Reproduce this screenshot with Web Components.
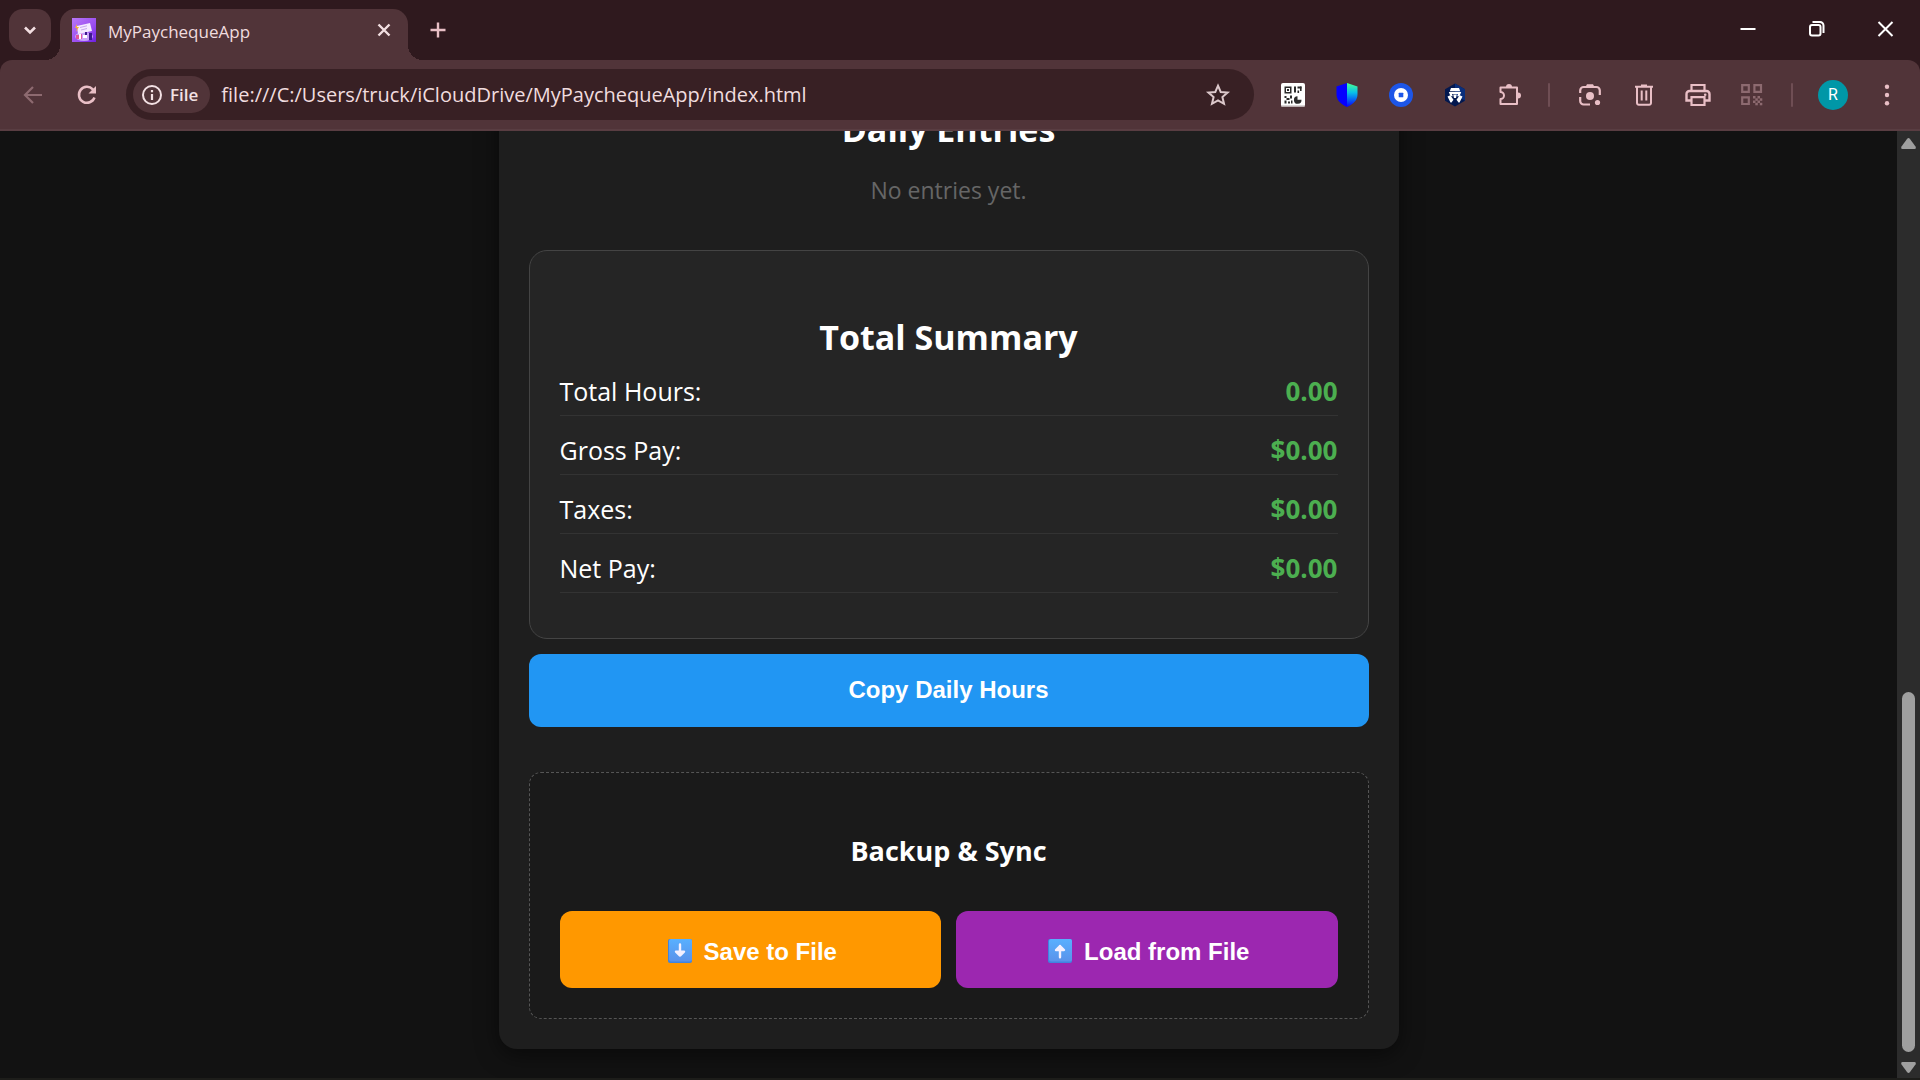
<!DOCTYPE html>
<html lang="en">
<head>
<meta charset="UTF-8">
<meta name="viewport" content="width=device-width, initial-scale=1.0">
<title>MyPaychequeApp</title>
<style>
    html, body {
        margin: 0;
        height: 100%;
        overflow: hidden;
        background: #121212;
    }

    body {
        font-family: 'Segoe UI', 'Open Sans', 'Noto Sans', sans-serif;
        color: #fff;
    }
</style>
</head>
<body>
<browser-window>
    <tab-strip slot="tabs">
        <browser-tab>MyPaychequeApp</browser-tab>
    </tab-strip>
    <browser-toolbar slot="toolbar" url="file:///C:/Users/truck/iCloudDrive/MyPaychequeApp/index.html"></browser-toolbar>
    <paycheque-app>
        <daily-entries></daily-entries>
        <total-summary>
            <summary-row label="Total Hours:">0.00</summary-row>
            <summary-row label="Gross Pay:">$0.00</summary-row>
            <summary-row label="Taxes:">$0.00</summary-row>
            <summary-row label="Net Pay:">$0.00</summary-row>
        </total-summary>
        <app-button color="blue">Copy Daily Hours</app-button>
        <backup-sync>
            <app-button color="orange" icon="down">Save to File</app-button>
            <app-button color="purple" icon="up">Load from File</app-button>
        </backup-sync>
    </paycheque-app>
    <page-scrollbar slot="scrollbar"></page-scrollbar>
</browser-window>

<script>
    const icons = {
        chevron: '<path d="M7 9.5l5 5 5-5" stroke-width="2.6"/>',
        close: '<path d="M6.5 6.5l11 11M17.5 6.5l-11 11" stroke-width="2.4"/>',
        plus: '<path d="M12 4.5v15M4.5 12h15" stroke-width="2.4"/>',
        back: '<path d="M21 12H4M12 4l-8 8 8 8" stroke-width="2.2"/>',
        reload: '<path d="M19.5 14.5a8 8 0 1 1-1.7-8.2L20 8.5" stroke-width="2.5"/><path d="M21 3v7.5h-7.5z" fill="currentColor" stroke="none"/>',
        info: '<circle cx="12" cy="12" r="9" stroke-width="2"/><path d="M12 11v6M12 7v2.2" stroke-width="2.2"/>',
        star: '<path d="M12 2.7l2.7 6.3 6.9.6-5.2 4.5 1.6 6.7-6-3.5-6 3.5 1.6-6.7-5.2-4.5 6.9-.6z" stroke-width="2"/>',
        qrcard: `<g stroke="none"><rect width="24" height="24" rx="2" fill="#fff"/><path d="M0 22.5h24a2 2 0 0 1-2 1.5H2a2 2 0 0 1-2-1.500z" fill="#b9aeb0"/>
            <g fill="#2b2b2b"><path d="M3.5 3.5h7v7h-7zM5 5v4h4V5z" fill-rule="evenodd"/><rect x="6" y="6" width="2" height="2"/>
            <rect x="13" y="3.5" width="2" height="6"/><rect x="16.5" y="3.5" width="4" height="2"/><rect x="19" y="3.5" width="1.6" height="4.5"/><rect x="16.5" y="7.5" width="1.6" height="2.5"/>
            <rect x="3.5" y="13" width="2" height="2"/><rect x="5.5" y="15" width="3" height="2"/><rect x="9" y="12.5" width="2" height="3"/><rect x="3.5" y="17.5" width="2" height="3"/><rect x="7" y="18.5" width="2" height="2"/><rect x="10" y="17.5" width="1.5" height="3"/>
            <path d="M16.5 13.2v3.600h4a3.800 3.800 0 1 1-4-3.600z"/></g></g>`,
        shield: `<defs><linearGradient id="sh" x1="0" y1="0" x2="0" y2="1"><stop offset="0" stop-color="#48ff91"/><stop offset=".4" stop-color="#08c0e8"/><stop offset="1" stop-color="#0500ff"/></linearGradient></defs>
            <g stroke="none"><path d="M12 0v24C4.5 20.6 1.5 16.5 1.5 11V3.5z" fill="#0500ff"/><path d="M12 0v24c7.5-3.4 10.5-7.5 10.5-13V3.5z" fill="url(#sh)"/></g>`,
        coin: '<g stroke="none"><circle cx="12" cy="12" r="12" fill="#1d56e8"/><circle cx="12" cy="12" r="7" fill="#fff"/><rect x="9.7" y="9.7" width="4.6" height="4.6" rx=".5" fill="#1d56e8"/></g>',
        hexlion: `<g stroke="none"><path d="M12 .5l10 5.7v11.600l-10 5.700-10-5.700V6.2z" fill="#03184f"/><path d="M12 .5l10 5.7v11.600l-10-5.800z" fill="#0a2f7c"/>
            <g fill="#fff"><path d="M8 5h8l1.200 3.200H6.800z"/><path d="M5.800 9h12.400l-1.700 4.200h-2.300l.8-2.200H9l.8 2.200H7.500z"/>
            <path d="M4.500 13.500L7.300 12.300l3.200 4.400-2 2.800H7.500zM19.500 13.500l-2.800-1.200-3.200 4.400 2 2.800h1z"/><path d="M10.200 11.500h3.600l-.8 3.500h-2z"/></g></g>`,
        puzzle: '<path d="M3.5 4.5H20V21H3.5v-5a3.500 3.500 0 0 0 0-7z" stroke-width="2" stroke-linejoin="round"/><path d="M9 4a3 3 0 0 1 6 0zM21 9.5a3 3 0 0 1 0 6z" fill="currentColor" stroke="none"/>',
        lens: `<path d="M2.2 10V7.5A3.5 3.5 0 0 1 5.7 4h12.600a3.500 3.500 0 0 1 3.500 3.500V12M2.2 14v4a3.500 3.500 0 0 0 3.500 3.500H12" stroke-width="2.2"/>
            <path d="M7.5 4L9 1.200h6L16.5 4z" fill="currentColor" stroke="none"/><circle cx="12" cy="13" r="4" fill="currentColor" stroke="none"/><circle cx="19.5" cy="19.5" r="2.6" fill="currentColor" stroke="none"/>`,
        trash: '<path d="M3 3.8h18M9 2.5h6M5 4.5V20a1.800 1.800 0 0 0 1.800 1.800h10.400A1.800 1.800 0 0 0 19 20V4.5M9.7 7.5v10M14.3 7.5v10" stroke-width="2"/>',
        printer: `<path d="M5.5 7.5V2h13v5.5" stroke-width="2.2"/><path d="M5.5 17.5h-5V11a3 3 0 0 1 3-3h17a3 3 0 0 1 3 3v6.500h-5" stroke-width="2.4"/>
            <path d="M5.5 14.200h13V22h-13z" stroke-width="2.2"/><circle cx="19.2" cy="11.7" r="1.3" fill="currentColor" stroke="none"/>`,
        qr: `<path d="M2.2 2.2h6.600v6.600H2.2zM14.4 2.2H21v6.600h-6.600zM2.2 14.4h6.600V21H2.2z" stroke-width="2.2"/>
            <g fill="currentColor" stroke="none"><rect x="13" y="13" width="2.5" height="2.5"/><rect x="17.5" y="13" width="2.5" height="2.5"/><rect x="15.3" y="15.3" width="2.5" height="2.5"/><rect x="19.8" y="15.3" width="2.5" height="2.5"/><rect x="13" y="17.5" width="2.5" height="2.5"/><rect x="17.5" y="17.5" width="2.5" height="2.5"/><rect x="15.3" y="19.8" width="2.5" height="2.5"/><rect x="19.8" y="19.8" width="2.5" height="2.5"/></g>`,
        dots: '<g fill="currentColor" stroke="none"><circle cx="12" cy="3.8" r="2.2"/><circle cx="12" cy="12" r="2.2"/><circle cx="12" cy="20.2" r="2.2"/></g>',
        minimize: '<path d="M4.5 12h15" stroke-width="2"/>',
        restore: '<rect x="5" y="8" width="10.5" height="10.5" rx="2" stroke-width="2"/><path d="M7.5 5H15a3.500 3.500 0 0 1 3.500 3.500V16" stroke-width="2"/>',
        exit: '<path d="M4.500 5l14 14M18.500 5l-14 14" stroke-width="2"/>'
    };

    const svg = name => `<svg viewBox="0 0 24 24" width="24" height="24" fill="none" stroke="currentColor" overflow="visible" aria-hidden="true">${icons[name]}</svg>`;

    class BrowserWindow extends HTMLElement {
        constructor() {
            super();
            this.attachShadow({ mode: 'open' });
            this.shadowRoot.innerHTML = `
                <style>
                    :host {
                        display: flex;
                        flex-direction: column;
                        height: 100vh;
                        box-sizing: border-box;
                        border-bottom: 2px solid #1d1d1a;
                    }

                    .view {
                        flex: 1;
                        min-height: 0;
                        display: flex;
                    }

                    /* reversed column keeps the view at the end of the page */
                    .page {
                        flex: 1;
                        display: flex;
                        flex-direction: column-reverse;
                        overflow: hidden;
                        background: #121212;
                    }
                </style>
                <slot name="tabs"></slot>
                <slot name="toolbar"></slot>
                <div class="view">
                    <div class="page"><slot></slot></div>
                    <slot name="scrollbar"></slot>
                </div>
            `;
        }
    }

    class IconButton extends HTMLElement {
        constructor() {
            super();
            this.attachShadow({ mode: 'open' });
        }

        connectedCallback() {
            this.shadowRoot.innerHTML = `
                <style>
                    :host {
                        display: flex;
                        flex: none;
                        width: 54px;
                        color: #e9bfc6;
                    }

                    :host([dim]) {
                        color: #8d6a70;
                    }

                    button {
                        flex: 1;
                        display: flex;
                        align-items: center;
                        justify-content: center;
                        padding: 0;
                        border: none;
                        background: none;
                        color: inherit;
                        cursor: pointer;
                    }

                    svg {
                        display: block;
                    }
                </style>
                <button aria-label="${this.getAttribute('label')}">${svg(this.getAttribute('icon'))}</button>
            `;
        }
    }

    class TabStrip extends HTMLElement {
        constructor() {
            super();
            this.attachShadow({ mode: 'open' });
            this.shadowRoot.innerHTML = `
                <style>
                    :host {
                        display: flex;
                        align-items: stretch;
                        height: 60px;
                        background: #2f191e;
                    }

                    .search {
                        width: 42px;
                        margin: 9px;
                        border-radius: 14px;
                        background: #513439;
                        color: #f3dfe2;
                    }

                    .new {
                        width: 60px;
                    }

                    .controls {
                        display: flex;
                        margin-left: auto;
                        padding-bottom: 2px;
                    }

                    .controls icon-button {
                        width: 69px;
                        color: #fff;
                    }
                </style>
                <icon-button class="search" icon="chevron" label="Search tabs"></icon-button>
                <slot></slot>
                <icon-button class="new" icon="plus" label="New tab"></icon-button>
                <div class="controls">
                    <icon-button icon="minimize" label="Minimize"></icon-button>
                    <icon-button icon="restore" label="Restore"></icon-button>
                    <icon-button icon="exit" label="Close"></icon-button>
                </div>
            `;
        }
    }

    class BrowserTab extends HTMLElement {
        constructor() {
            super();
            this.attachShadow({ mode: 'open' });
            this.shadowRoot.innerHTML = `
                <style>
                    :host {
                        position: relative;
                        display: flex;
                        align-items: center;
                        width: 348px;
                        margin-top: 9px;
                        padding: 0 0 9px 12px;
                        box-sizing: border-box;
                        border-radius: 15px 15px 0 0;
                        background: #513439;
                        color: #f0dcdf;
                        font-size: 17px;
                    }

                    :host::before,
                    :host::after {
                        content: '';
                        position: absolute;
                        bottom: 0;
                        width: 15px;
                        height: 15px;
                    }

                    :host::before {
                        right: 100%;
                        background: radial-gradient(circle at 0 0, transparent 15px, #513439 15px);
                    }

                    :host::after {
                        left: 100%;
                        background: radial-gradient(circle at 100% 0, transparent 15px, #513439 15px);
                    }

                    .title {
                        flex: 1;
                        padding: 4px 0 0 12px;
                        line-height: 24px;
                    }

                    icon-button {
                        width: 48px;
                        align-self: stretch;
                        color: #f3dfe2;
                    }
                </style>
                <svg viewBox="0 0 24 24" width="24" height="24" aria-hidden="true">
                    <defs>
                        <linearGradient id="fav" x1="0" y1="0" x2="1" y2="1">
                            <stop offset="0" stop-color="#b878f8"/>
                            <stop offset=".6" stop-color="#9a4df0"/>
                            <stop offset="1" stop-color="#6d1fe0"/>
                        </linearGradient>
                    </defs>
                    <rect width="24" height="24" fill="url(#fav)"/>
                    <ellipse cx="12" cy="18.5" rx="9" ry="4.5" fill="#c9a2fa"/>
                    <path d="M5 8l13-3 2 8-14 3z" fill="#f4eaff"/>
                    <path d="M8 9.500l7-1.700M9 12l6-1.500" stroke="#c7a6ee" stroke-width="1"/>
                    <path d="M5 6l-2 4h2l-1 4 3-5H5z" fill="#f7b731"/>
                    <path d="M4 17h3v4H4zM9 16h1v5H9z" fill="#e2559d"/>
                    <path d="M13 14h2v4h-2zM17 15h3v7h-3z" fill="#3d1a8f"/>
                    <path d="M7 16h2v5H7zM11 17h4v3h-4z" fill="#fff"/>
                </svg>
                <span class="title"><slot></slot></span>
                <icon-button icon="close" label="Close tab"></icon-button>
            `;
        }
    }

    class BrowserToolbar extends HTMLElement {
        constructor() {
            super();
            this.attachShadow({ mode: 'open' });
        }

        connectedCallback() {
            this.shadowRoot.innerHTML = `
                <style>
                    :host {
                        display: block;
                        background: #2f191e;
                    }

                    .bar {
                        display: flex;
                        align-items: stretch;
                        padding: 9px 6px;
                        border-bottom: 2px solid #593d42;
                        border-radius: 12px 12px 0 0;
                        background: #513439;
                    }

                    .address {
                        flex: 1;
                        min-width: 0;
                        display: flex;
                        align-items: center;
                        height: 51px;
                        margin: 0 12px;
                        padding: 0 9px 0 7px;
                        box-sizing: border-box;
                        border-radius: 26px;
                        background: #382024;
                    }

                    .chip {
                        display: flex;
                        align-items: center;
                        gap: 6px;
                        height: 37px;
                        padding: 0 12px 0 7px;
                        border: none;
                        border-radius: 19px;
                        background: #513439;
                        color: #f3e1e4;
                        font: 600 17px 'Segoe UI', 'Open Sans', 'Noto Sans', sans-serif;
                    }

                    input {
                        flex: 1;
                        min-width: 0;
                        height: 37px;
                        margin-left: 11px;
                        padding: 0;
                        border: none;
                        outline: none;
                        background: none;
                        color: #f0dcdf;
                        font-family: inherit;
                        font-size: 20px;
                    }

                    .star {
                        color: #dcc8cb;
                    }

                    .divider {
                        width: 2px;
                        height: 24px;
                        margin: 0 13px 0 12px;
                        align-self: center;
                        border-radius: 1px;
                        background: #6f4e54;
                    }

                    .avatar {
                        width: 30px;
                        height: 30px;
                        margin: 0 12px;
                        padding: 0;
                        align-self: center;
                        border: none;
                        border-radius: 50%;
                        background: #0097a7;
                        color: #fff;
                        font: 16px Roboto, sans-serif;
                    }
                </style>
                <div class="bar">
                    <icon-button icon="back" label="Back" dim></icon-button>
                    <icon-button icon="reload" label="Reload"></icon-button>
                    <div class="address">
                        <button class="chip">${svg('info')}File</button>
                        <input type="text" aria-label="Address" value="${this.getAttribute('url')}" spellcheck="false">
                        <icon-button class="star" icon="star" label="Bookmark"></icon-button>
                    </div>
                    <icon-button icon="qrcard" label="QR reader"></icon-button>
                    <icon-button icon="shield" label="Wallet"></icon-button>
                    <icon-button icon="coin" label="Coin wallet"></icon-button>
                    <icon-button icon="hexlion" label="Exchange"></icon-button>
                    <icon-button icon="puzzle" label="Extensions"></icon-button>
                    <span class="divider"></span>
                    <icon-button icon="lens" label="Search with Lens"></icon-button>
                    <icon-button icon="trash" label="Delete browsing data"></icon-button>
                    <icon-button icon="printer" label="Print"></icon-button>
                    <icon-button icon="qr" label="Create QR code" dim></icon-button>
                    <span class="divider"></span>
                    <button class="avatar">R</button>
                    <icon-button icon="dots" label="Menu"></icon-button>
                </div>
            `;
        }
    }

    class PageScrollbar extends HTMLElement {
        constructor() {
            super();
            this.attachShadow({ mode: 'open' });
            this.shadowRoot.innerHTML = `
                <style>
                    :host {
                        display: flex;
                        flex-direction: column;
                        align-items: center;
                        width: 23px;
                        background: #2c2c2c;
                    }

                    svg {
                        flex: none;
                        display: block;
                    }

                    .track {
                        flex: 1;
                        display: grid;
                        grid-template-rows: 537fr 360fr;
                        width: 13px;
                    }

                    .thumb {
                        grid-row: 2;
                        border-radius: 7px;
                        background: #9f9f9f;
                    }
                </style>
                <svg width="23" height="24" fill="#9f9f9f" aria-hidden="true"><path d="M10 8q1.500-2 3 0l5.500 7.500q1 2.500-1 2.500h-12q-2 0-1-2.500z"/></svg>
                <div class="track"><div class="thumb"></div></div>
                <svg width="23" height="26" fill="#9f9f9f" aria-hidden="true"><path d="M10 20q1.500 2 3 0l5.500-7.500q1-2.500-1-2.500h-12q-2 0-1 2.500z"/></svg>
            `;
        }
    }

    class PaychequeApp extends HTMLElement {
        constructor() {
            super();
            this.attachShadow({ mode: 'open' });
            this.shadowRoot.innerHTML = `
                <style>
                    :host {
                        display: block;
                        flex: none;
                        width: 100%;
                        max-width: 900px;
                        margin: 0 auto;
                        padding: 29px 0;
                    }

                    main {
                        display: flex;
                        flex-direction: column;
                        padding: 30px;
                        border-radius: 18px;
                        background: #1e1e1e;
                        box-shadow: 0 6px 22px rgba(0, 0, 0, 0.5);
                    }
                </style>
                <main><slot></slot></main>
            `;
        }
    }

    class DailyEntries extends HTMLElement {
        constructor() {
            super();
            this.attachShadow({ mode: 'open' });
            this.shadowRoot.innerHTML = `
                <style>
                    :host {
                        display: block;
                        margin-bottom: 44px;
                        text-align: center;
                    }

                    h2 {
                        margin: 0 0 24px;
                        font-size: 34px;
                        line-height: 42px;
                    }

                    p {
                        margin: 0;
                        color: #666;
                        font-size: 23px;
                        line-height: 32px;
                    }
                </style>
                <h2>Daily Entries</h2>
                <p>No entries yet.</p>
            `;
        }
    }

    class TotalSummary extends HTMLElement {
        constructor() {
            super();
            this.attachShadow({ mode: 'open' });
            this.shadowRoot.innerHTML = `
                <style>
                    :host {
                        display: block;
                        margin-bottom: 15px;
                        padding: 30px;
                        border: 1px solid #444;
                        border-radius: 18px;
                        background: #252525;
                    }

                    h2 {
                        margin: 32px 0 11px;
                        font-size: 34px;
                        line-height: 48px;
                        text-align: center;
                    }
                </style>
                <h2>Total Summary</h2>
                <slot></slot>
            `;
        }
    }

    class SummaryRow extends HTMLElement {
        constructor() {
            super();
            this.attachShadow({ mode: 'open' });
        }

        connectedCallback() {
            this.shadowRoot.innerHTML = `
                <style>
                    :host {
                        display: flex;
                        justify-content: space-between;
                        margin-bottom: 15px;
                        padding-bottom: 5px;
                        border-bottom: 1px solid #333;
                        font-size: 25px;
                        line-height: 38px;
                    }

                    strong {
                        color: #4caf50;
                        font-size: 26px;
                    }
                </style>
                <span>${this.getAttribute('label')}</span>
                <strong><slot></slot></strong>
            `;
        }
    }

    class AppButton extends HTMLElement {
        constructor() {
            super();
            this.attachShadow({ mode: 'open' });
        }

        connectedCallback() {
            const arrows = {
                down: 'M12 4v14M7 13l5 5 5-5z',
                up: 'M12 20V6M7 11l5-5 5 5z'
            };
            const icon = this.getAttribute('icon');

            this.shadowRoot.innerHTML = `
                <style>
                    :host {
                        display: flex;
                        --button-color: #2196f3;
                    }

                    :host([color="orange"]) {
                        --button-color: #ff9800;
                    }

                    :host([color="purple"]) {
                        --button-color: #9c27b0;
                    }

                    button {
                        flex: 1;
                        display: flex;
                        align-items: center;
                        justify-content: center;
                        gap: 12px;
                        padding: 21px 24px 23px;
                        border: none;
                        border-radius: 12px;
                        background: var(--button-color);
                        color: #fff;
                        font: bold 24px/29px Arial, 'Liberation Sans', sans-serif;
                        cursor: pointer;
                    }

                    :host([icon]) button {
                        padding: 26px 24px 22px 28px;
                    }

                    svg {
                        margin-bottom: 2px;
                    }
                </style>
                <button>
                    ${icon ? `<svg viewBox="0 0 24 24" width="24" height="24" aria-hidden="true">
                        <defs><linearGradient id="key" x1="0" y1="0" x2="0" y2="1"><stop offset="0" stop-color="#58b0ff"/><stop offset="1" stop-color="#5a92ea"/></linearGradient></defs>
                        <rect width="24" height="24" rx="2" fill="#3f84e0"/>
                        <rect x="1" width="23" height="22.5" rx="2" fill="url(#key)"/>
                        <path d="${arrows[icon]}" fill="#f4f0ff" stroke="#f4f0ff" stroke-width="3" stroke-linejoin="round" stroke-linecap="round"
                            transform="translate(2.4 2.2) scale(.8)"/>
                    </svg>` : ''}
                    <slot></slot>
                </button>
            `;
        }
    }

    class BackupSync extends HTMLElement {
        constructor() {
            super();
            this.attachShadow({ mode: 'open' });
            this.shadowRoot.innerHTML = `
                <style>
                    :host {
                        display: block;
                        margin-top: 45px;
                        padding: 30px;
                        border: 1px dashed #555;
                        border-radius: 12px;
                        background: #1a1a1a;
                    }

                    h3 {
                        margin: 29px 0 41px;
                        font-size: 27px;
                        line-height: 38px;
                        text-align: center;
                    }

                    .actions {
                        display: grid;
                        grid-template-columns: 1fr 1fr;
                        gap: 15px;
                    }
                </style>
                <h3>Backup &amp; Sync</h3>
                <div class="actions"><slot></slot></div>
            `;
        }
    }

    customElements.define('icon-button', IconButton);
    customElements.define('browser-window', BrowserWindow);
    customElements.define('tab-strip', TabStrip);
    customElements.define('browser-tab', BrowserTab);
    customElements.define('browser-toolbar', BrowserToolbar);
    customElements.define('page-scrollbar', PageScrollbar);
    customElements.define('paycheque-app', PaychequeApp);
    customElements.define('daily-entries', DailyEntries);
    customElements.define('total-summary', TotalSummary);
    customElements.define('summary-row', SummaryRow);
    customElements.define('app-button', AppButton);
    customElements.define('backup-sync', BackupSync);
</script>
</body>
</html>
